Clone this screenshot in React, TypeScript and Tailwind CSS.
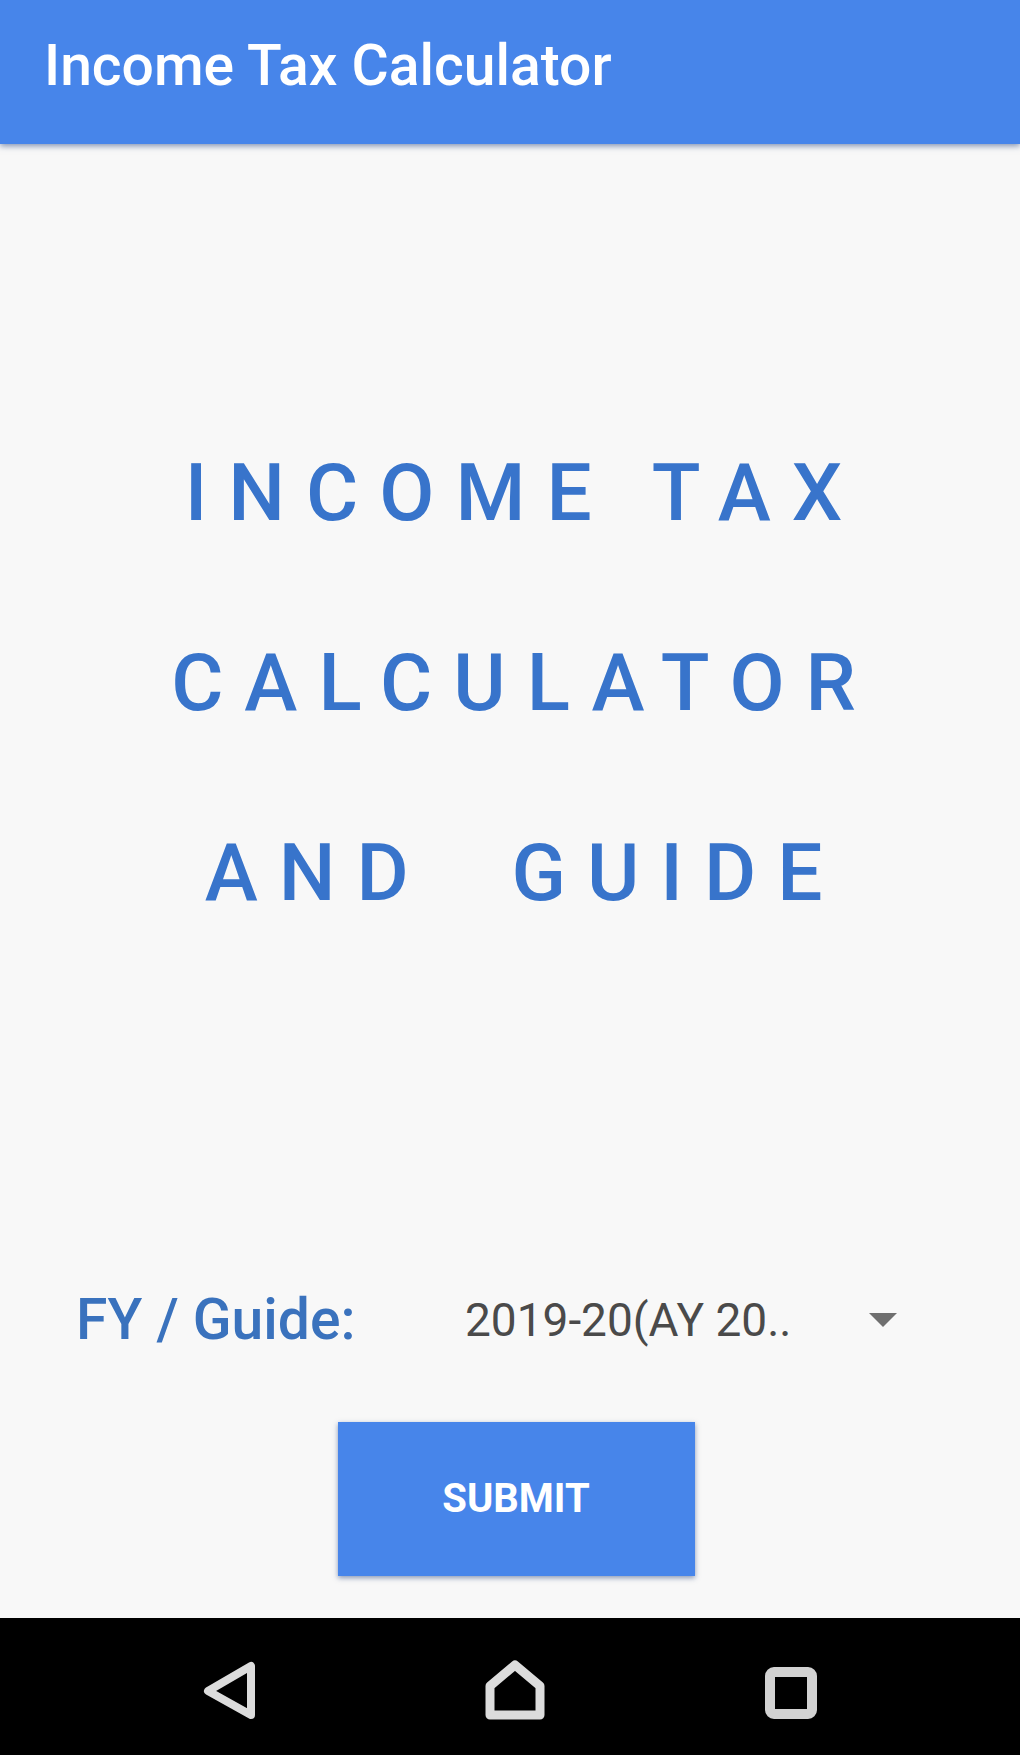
import { useState } from "react";

const YEARS = ["2019-20(AY 20..", "2018-19(AY 20..", "Guide"];

function AppBar() {
  return (
    <header className="relative bg-[#4785ea] px-11 pt-8 pb-11 shadow-[0_2px_6px_rgba(30,60,120,0.55)]">
      <h1 className="text-[57px] leading-[68px] font-medium text-white">
        Income Tax Calculator
      </h1>
    </header>
  );
}

function Banner() {
  return (
    <h2 className="flex flex-col items-center pl-7 text-[80px] leading-[190px] font-medium tracking-[21px] text-[#3874cb] whitespace-pre">
      <span>INCOME TAX</span>
      <span>CALCULATOR</span>
      <span>AND  GUIDE</span>
    </h2>
  );
}

function YearSelect() {
  const [year, setYear] = useState(YEARS[0]);

  return (
    <div className="flex items-center px-19">
      <label
        htmlFor="year"
        className="w-[389px] text-[57px] leading-[68px] font-medium text-[#3a72bd]"
      >
        FY / Guide:
      </label>
      <div className="flex flex-1 items-center">
        <select
          id="year"
          value={year}
          onChange={(e) => setYear(e.target.value)}
          className="w-[404px] appearance-none bg-transparent text-[46px] leading-[68px] text-[#4a4a4a] outline-none"
        >
          {YEARS.map((item) => (
            <option key={item}>{item}</option>
          ))}
        </select>
        <svg viewBox="0 0 28 14" className="h-3.5 w-7 shrink-0" aria-hidden="true">
          <path d="M0 0h28L14 14z" fill="#6f6f6f" />
        </svg>
      </div>
    </div>
  );
}

function NavBar() {
  return (
    <nav className="flex items-center justify-between bg-black px-[202px] pt-[42px] pb-[35px]">
      <button aria-label="Back">
        <svg viewBox="0 0 64 60" className="h-15 w-16" fill="none">
          <path
            d="M6 31 49 6v49z"
            stroke="#dcdcdc"
            strokeWidth="8"
            strokeLinejoin="round"
          />
        </svg>
      </button>
      <button aria-label="Home">
        <svg viewBox="0 0 60 60" className="size-15" fill="none">
          <path
            d="M5 55V26L30 5l25 21v29z"
            stroke="#dcdcdc"
            strokeWidth="9"
            strokeLinejoin="round"
          />
        </svg>
      </button>
      <button aria-label="Recent apps">
        <svg viewBox="0 0 54 60" className="h-15 w-[54px]" fill="none">
          <rect
            x="6"
            y="12"
            width="42"
            height="42"
            rx="4"
            stroke="#d2d2d2"
            strokeWidth="10"
          />
        </svg>
      </button>
    </nav>
  );
}

function App() {
  return (
    <div className="flex min-h-screen flex-col bg-[#f8f8f8] font-['Roboto',sans-serif]">
      <AppBar />
      <main className="flex flex-1 flex-col justify-between pt-[254px] pb-[42px]">
        <Banner />
        <form
          className="flex flex-col gap-[68px]"
          onSubmit={(e) => e.preventDefault()}
        >
          <YearSelect />
          <div className="flex justify-center pl-3">
            <button
              type="submit"
              className="w-[357px] bg-[#4785ea] py-[43px] text-[40px] leading-[68px] font-bold text-white shadow-[0_2px_5px_rgba(30,60,120,0.5)]"
            >
              SUBMIT
            </button>
          </div>
        </form>
      </main>
      <NavBar />
    </div>
  );
}

export default App;
